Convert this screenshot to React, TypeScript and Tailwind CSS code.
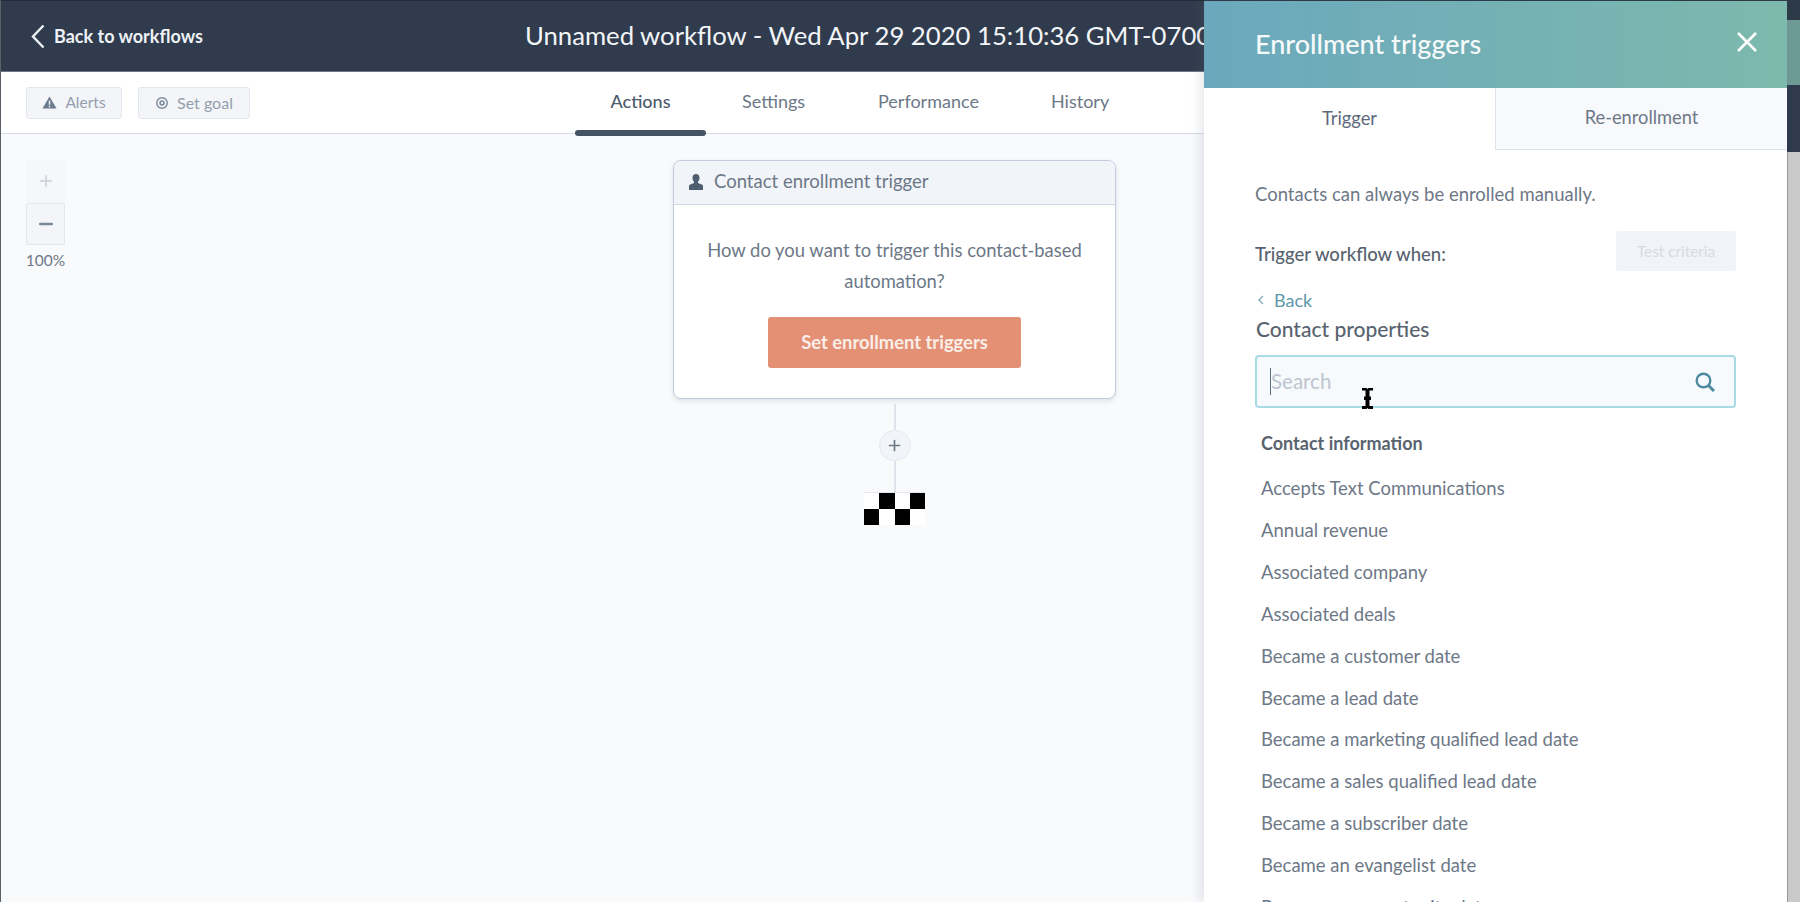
import React from "react";
import { Plus, Minus } from "lucide-react";

const items = [
  "Accepts Text Communications",
  "Annual revenue",
  "Associated company",
  "Associated deals",
  "Became a customer date",
  "Became a lead date",
  "Became a marketing qualified lead date",
  "Became a sales qualified lead date",
  "Became a subscriber date",
  "Became an evangelist date",
  "Became an opportunity date",
];

function Checker() {
  const cells = [0, 1, 0, 1, 1, 0, 1, 0];
  return (
    <div className="grid grid-cols-[repeat(4,15.25px)] grid-rows-[repeat(2,16px)] border-t border-[#e5e8ee]">
      {cells.map((c, i) => (
        <div key={i} className={c ? "bg-black" : "bg-white"} />
      ))}
    </div>
  );
}

export default function App() {
  return (
    <div className="flex h-[902px] w-[1800px] overflow-hidden bg-[#f9fafc] font-['Lato','Open_Sans',sans-serif] text-[#6d7887]">
      <div className="flex h-[902px] w-[1204px] shrink-0 flex-col overflow-hidden border-l border-[#5a6068]">
        <header className="flex h-[72px] shrink-0 items-center whitespace-nowrap border-b border-t border-b-[#6b7686] border-t-[#222c38] bg-[#303c4d] pl-[30px] text-white">
          <svg viewBox="0 0 14 25" className="h-[25px] w-[14px] shrink-0 fill-none stroke-[#eef1f5]" strokeWidth="2.4"><path d="M12.500 1.500 2 12.500 12.500 23.500" /></svg>
          <span className="ml-[9px] w-[471px] shrink-0 text-[18px] font-bold text-[#eef1f5]">Back to workflows</span>
          <span className="text-[25.7px] leading-none text-[#f3f5f8]">Unnamed workflow - Wed Apr 29 2020 15:10:36 GMT-0700</span>
        </header>
        <nav className="relative flex h-[62px] shrink-0 items-center whitespace-nowrap border-b border-[#d6dbe3] bg-white pl-[25px]">
          <div className="flex h-[32px] w-[96px] items-center justify-center gap-[8px] rounded-[3px] border border-[#e3e6ed] bg-[#f3f5f9] text-[15.5px] text-[#949fae]">
            <svg viewBox="0 0 16 16" className="h-[15px] w-[15px] fill-[#6b7a8d]"><path d="M8 1.500 15.500 14.500H.5ZM7.200 6v4.500h1.600V6Zm0 5.500v1.600h1.600v-1.600Z" fillRule="evenodd" /></svg>
            Alerts
          </div>
          <div className="ml-[16px] flex h-[32px] w-[112px] items-center justify-center gap-[8px] rounded-[3px] border border-[#e3e6ed] bg-[#f3f5f9] text-[16px] text-[#949fae]">
            <svg viewBox="0 0 16 16" className="h-[14px] w-[14px] fill-none stroke-[#7b899b]"><circle cx="8" cy="8" r="6" strokeWidth="1.6" /><circle cx="8" cy="8" r="2.200" strokeWidth="1.800" /></svg>
            Set goal
          </div>
          <div className="ml-[325px] flex h-full text-[18px]">
            <div className="relative flex w-[131px] items-center justify-center pb-[2px] font-medium text-[#4d5a6c]">
              Actions
              <span className="absolute -bottom-[3px] left-0 h-[6px] w-full rounded-full bg-[#465365]" />
            </div>
            <div className="ml-[36px] flex w-[136px] items-center pb-[2px] text-[#6d7887]">Settings</div>
            <div className="flex w-[173px] items-center pb-[2px] text-[#6d7887]">Performance</div>
            <div className="flex items-center pb-[2px] text-[#6d7887]">History</div>
          </div>
        </nav>
        <main className="flex flex-1">
          <div className="ml-[25px] mt-[26px] flex w-[39px] shrink-0 flex-col items-center">
            <div className="flex h-[43px] w-[39px] items-center justify-center bg-[#f6f7fa] pb-[2px]"><Plus className="h-[18px] w-[18px] text-[#c8ced8]" /></div>
            <div className="flex h-[42px] w-[39px] items-center justify-center rounded-[2px] border border-[#e3e6ed] bg-[#f3f5f9]"><Minus className="h-[20px] w-[20px] text-[#7b899b]" strokeWidth={3} /></div>
            <span className="mt-[5px] text-[15.5px] leading-5 text-[#6d7887]">100%</span>
          </div>
          <div className="ml-[608px] mt-[26px] flex w-[443px] shrink-0 flex-col items-center">
            <div className="w-full overflow-hidden rounded-[8px] border border-[#c3ccdc] bg-white shadow-[0_2px_5px_rgba(100,110,140,0.18)]">
              <div className="flex h-[44px] items-center border-b border-[#cfd6e2] bg-[#f1f4f9] pb-[2px] pl-[15px] text-[18.5px] text-[#6d7887]">
                <svg viewBox="0 0 14 16" className="h-[16px] w-[14px] fill-[#4f5d70]"><path d="M7 0c2.200 0 3.500 1.700 3.500 3.900 0 1.600-.7 3-1.500 3.800v1.200l3.700 1.600c.9.4 1.300 1.100 1.300 2V16H0v-3.500c0-.9.4-1.600 1.300-2L5 8.900V7.700C4.200 6.900 3.500 5.500 3.500 3.900 3.500 1.700 4.800 0 7 0Z" /></svg>
                <span className="ml-[11px]">Contact enrollment trigger</span>
              </div>
              <div className="flex h-[193px] flex-col items-center pt-[30px] text-center text-[18.4px] leading-[31px] text-[#6d7887]">
                <p className="w-[400px]">How do you want to trigger this contact-based automation?</p>
                <button className="mt-[20px] h-[51px] w-[253px] rounded-[3px] bg-[#e39074] text-[18.4px] font-bold text-[#fbeee8]">Set enrollment triggers</button>
              </div>
            </div>
            <div className="mt-[5px] h-[26px] w-[2px] bg-[#e0e3ea]" />
            <div className="flex h-[31px] w-[32px] items-center justify-center rounded-full border border-[#e5e8ef] bg-[#f1f4f9]"><Plus className="h-[17px] w-[17px] text-[#6d7887]" strokeWidth={2.400} /></div>
            <div className="h-[31px] w-[2px] bg-[#e0e3ea]" />
            <Checker />
          </div>
        </main>
      </div>

      <aside className="relative z-10 flex h-[902px] w-[583px] shrink-0 flex-col overflow-hidden bg-white shadow-[-5px_0_10px_rgba(100,110,130,0.14)]">
        <div className="flex h-[88px] shrink-0 items-center justify-between border-t border-[#2d3a48] bg-gradient-to-r from-[#6ba8bd] to-[#7db9ac] pl-[51px] pr-[30px] text-white">
          <span className="text-[27px] font-medium text-[#f6fafa]">Enrollment triggers</span>
          <svg viewBox="0 0 20 20" className="-mt-[5px] h-[20px] w-[20px] stroke-white" strokeWidth="2.600"><path d="M1 1 19 19M19 1 1 19" /></svg>
        </div>
        <div className="flex h-[62px] shrink-0 text-[18.3px]">
          <div className="flex w-[291px] items-center justify-center pb-[1px] text-[#5d6a7c]">Trigger</div>
          <div className="flex flex-1 items-center justify-center border-b border-l border-[#dfe3eb] bg-[#f8f9fc] pb-[1px] text-[#6d7887]">Re-enrollment</div>
        </div>
        <div className="flex min-h-0 flex-1 flex-col whitespace-nowrap px-[51px]">
          <p className="mt-[32px] text-[18.5px] leading-6 text-[#6d7887]">Contacts can always be enrolled manually.</p>
          <div className="mt-[25px] flex h-[40px] shrink-0 items-center justify-between">
            <span className="pt-[8px] text-[18.5px] font-medium text-[#58636f]">Trigger workflow when:</span>
            <span className="flex h-[40px] w-[120px] items-center justify-center rounded-[3px] bg-[#f1f3f8] text-[15.3px] text-[#d6dbe4]">Test criteria</span>
          </div>
          <div className="mt-[17px] flex items-center text-[18px] leading-6 text-[#5e98ab]">
            <svg viewBox="0 0 6 10" className="ml-[3px] h-[10px] w-[6px] fill-none stroke-[#7da9b8]" strokeWidth="1.300"><path d="M5 1 1 5 5 9" /></svg>
            <span className="ml-[10px]">Back</span>
          </div>
          <h2 className="ml-[1px] mt-[4px] text-[21px] font-medium leading-[26px] text-[#58636f]">Contact properties</h2>
          <div className="relative mt-[13px] flex h-[53px] shrink-0 items-center rounded-[4px] border-2 border-[#a9dbe5] bg-[#f7fafc] pl-[14px] pr-[19px] text-[20.5px] text-[#bcc5d1]">
            <span className="absolute left-[13px] top-[11px] h-[27px] w-[1px] bg-[#5f6e82]" />
            <span className="flex-1">Search</span>
            <svg viewBox="0 0 20 20" className="h-[20px] w-[20px] fill-none stroke-[#4f8ba0]"><circle cx="8.500" cy="8.500" r="6.800" strokeWidth="2.400" /><path d="M13.500 13.500 19 19" strokeWidth="3" /></svg>
            <svg viewBox="0 0 11 21" className="absolute left-[105px] top-[31px] h-[21px] w-[11px] fill-black"><path d="M0 0h4.500L5.500 1 6.500 0H11v2.500H7.500v6H9V12H7.500v6H11v3H6.500L5.500 20 4.500 21H0v-3h3.500v-6H2V8.500h1.500v-6H0Z" /></svg>
          </div>
          <div className="ml-[6px] mt-[23px] text-[18px] font-bold leading-6 text-[#58636f]">Contact information</div>
          <ul className="ml-[6px] mt-[13px]">
            {items.map((t) => (
              <li key={t} className="flex h-[41.9px] items-center text-[18.5px] text-[#6d7887]">{t}</li>
            ))}
          </ul>
        </div>
      </aside>

      <div className="flex w-[13px] shrink-0 flex-col">
        <div className="h-[20px] bg-[#2d3a48]" />
        <div className="h-[65px] bg-[#6e9a95]" />
        <div className="h-[67px] bg-[#2f3b4d]" />
        <div className="flex-1 border-l border-[#9a9a9a] bg-[#c9c9c9]" />
      </div>
    </div>
  );
}
